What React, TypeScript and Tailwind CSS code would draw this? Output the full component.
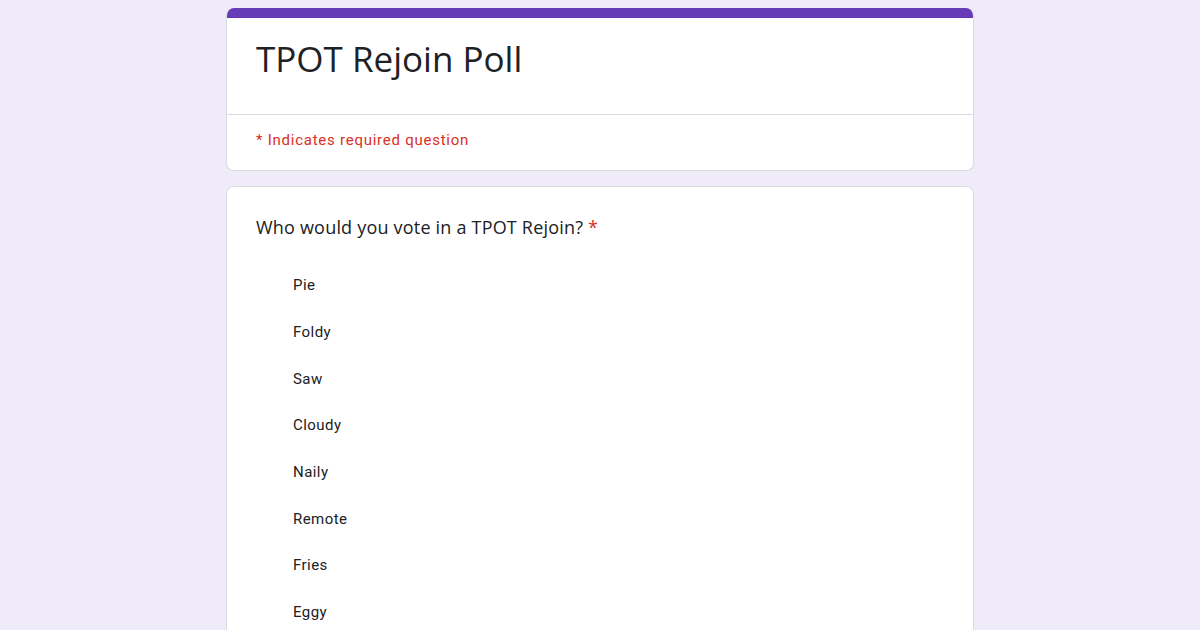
import React from "react";

const options = ["Pie", "Foldy", "Saw", "Cloudy", "Naily", "Remote", "Fries", "Eggy"];

export default function App() {
  return (
    <div className="h-[630px] w-full overflow-hidden bg-[#f0ebf8]">
      <div className="mx-auto w-[748px] pt-[8px]">
        <div className="overflow-hidden rounded-lg bg-white border border-t-0 border-[#dadce0]">
          <div className="h-[10px] bg-[#673ab7]" />
          <div className="h-[96px] pt-[19px] pl-[29px]">
            <h1
              className="text-[35px] leading-[44px] text-[#202124]"
              style={{ fontFamily: '"Open Sans", sans-serif' }}
            >
              TPOT Rejoin Poll
            </h1>
          </div>
          <div className="h-px bg-[#dadce0]" />
          <div className="h-[55px] pt-[15px] pl-[29px]">
            <p
              className="text-[15px] leading-[20px] text-[#d93025] tracking-[0.75px]"
              style={{ fontFamily: "Roboto, sans-serif" }}
            >
              * Indicates required question
            </p>
          </div>
        </div>

        <div className="mt-[15px] h-[460px] rounded-lg bg-white border border-[#dadce0] pt-[28px]">
          <p
            className="pl-[29px] text-[18px] leading-[24px] tracking-[0.2px] text-[#202124]"
            style={{ fontFamily: '"Open Sans", sans-serif' }}
          >
            Who would you vote in a TPOT Rejoin? <span className="text-[#d93025]">*</span>
          </p>
          <div className="mt-[23px] flex flex-col">
            {options.map((o) => (
              <div key={o} className="flex h-[46.65px] items-center pl-[66px]">
                <span
                  className="text-[15px] leading-[20px] tracking-[0.45px] text-[#202124]"
                  style={{ fontFamily: "Roboto, sans-serif" }}
                >
                  {o}
                </span>
              </div>
            ))}
          </div>
        </div>
      </div>
    </div>
  );
}
